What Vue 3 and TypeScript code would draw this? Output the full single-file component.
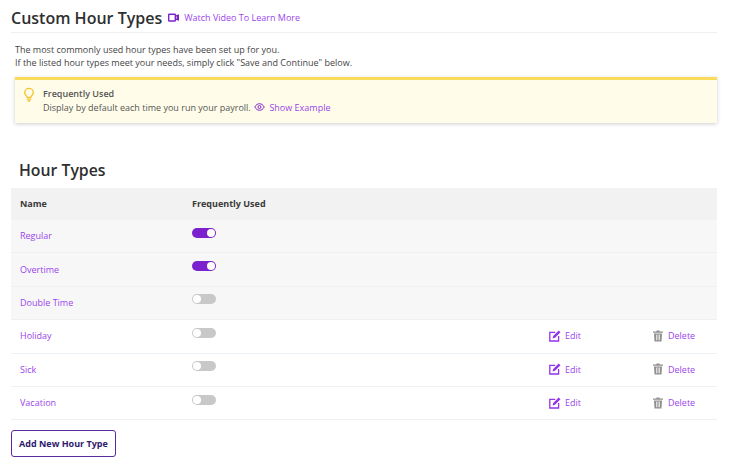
<script setup lang="ts">
interface HourType {
  name: string
  frequent: boolean
  builtIn: boolean
}

const hourTypes: HourType[] = [
  { name: 'Regular', frequent: true, builtIn: true },
  { name: 'Overtime', frequent: true, builtIn: true },
  { name: 'Double Time', frequent: false, builtIn: true },
  { name: 'Holiday', frequent: false, builtIn: false },
  { name: 'Sick', frequent: false, builtIn: false },
  { name: 'Vacation', frequent: false, builtIn: false }
]
</script>

<template>
  <div class="page">
    <header class="page-header">
      <h1 class="page-title">Custom Hour Types</h1>
      <a class="link video-link">
        <svg width="11" height="9" viewBox="0 0 11 9" fill="none" stroke="#7e22ce" stroke-width="1.4">
          <rect x="0.7" y="1.2" width="6.6" height="6.8" rx="0.5" />
          <path d="M7.5 3.2l2.8-.9v4.6l-2.8-.9" />
          <path d="M9.4 2.4v4.4" />
        </svg>
        Watch Video To Learn More
      </a>
    </header>

    <p class="intro">
      The most commonly used hour types have been set up for you.<br>
      If the listed hour types meet your needs, simply click "Save and Continue" below.
    </p>

    <div class="notice">
      <svg class="notice__icon" width="10" height="16" viewBox="0 0 14 20" fill="none" stroke="#f5c02c" stroke-width="1.8">
        <path d="M4.4 13.4C4.2 11.4 1 9.8 1 6.4a6 5.6 0 0 1 12 0c0 3.4-3.2 5-3.4 7z" />
        <path d="M4.6 15.8h4.8M5.8 18.4h2.4" stroke-linecap="round" />
      </svg>
      <div>
        <div class="notice__title">Frequently Used</div>
        <div class="notice__text">
          Display by default each time you run your payroll.
          <a class="link example-link">
            <svg width="11" height="8" viewBox="0 0 12 9" fill="none" stroke="#7e22ce" stroke-width="1.1">
              <path d="M0.7 4.5C2 2 3.9 0.8 6 0.8s4 1.2 5.3 3.7C10 7 8.1 8.2 6 8.2S2 7 0.7 4.5z" />
              <circle cx="6" cy="4.5" r="1.7" />
            </svg>
            Show Example
          </a>
        </div>
      </div>
    </div>

    <h2 class="section-title">Hour Types</h2>

    <div class="table">
      <div class="row row--head">
        <div class="cell-name">Name</div>
        <div class="cell-freq">Frequently Used</div>
      </div>
      <div
        v-for="item in hourTypes"
        :key="item.name"
        class="row"
        :class="{ 'row--shaded': item.builtIn }"
      >
        <a class="link cell-name">{{ item.name }}</a>
        <div class="cell-freq">
          <span class="toggle" :class="{ 'toggle--on': item.frequent }"><span class="toggle__knob"></span></span>
        </div>
        <template v-if="!item.builtIn">
          <a class="link cell-edit">
            <svg width="12" height="12" viewBox="0 0 12 12" fill="none">
              <path d="M9.6 6v5H.8V2.4h5.4" stroke="#9333ea" stroke-width="1.3" />
              <path d="M3.6 8.4l.6-2.4L9.7.6l1.8 1.7L6 7.8z" fill="#9333ea" />
            </svg>
            Edit
          </a>
          <a class="link cell-delete">
            <svg width="10" height="12" viewBox="0 0 10 12" fill="#8f8f8f">
              <path d="M0 1.6h3.2L3.7.5h2.6l.5 1.1H10v1.2H0z" />
              <path d="M1 3.4h8l-.5 8.1H1.5zM3 4.6v5.6h.7V4.6zm1.7 0v5.6h.7V4.6zm1.6 0v5.6H7V4.6z" fill-rule="evenodd" />
            </svg>
            Delete
          </a>
        </template>
      </div>
    </div>

    <button class="add-btn">Add New Hour Type</button>
  </div>
</template>

<style>
html,
body {
  background: #fff;
}
</style>

<style scoped>
.page {
  width: 730px;
  height: 473px;
  overflow: hidden;
  box-sizing: border-box;
  padding: 0 13px 0 11px;
  font-family: "Open Sans", "Noto Sans", sans-serif;
  font-size: 9px;
  color: #333;
}

.link {
  color: #9a45ec;
  cursor: pointer;
}

.page-header {
  display: flex;
  align-items: center;
  gap: 6px;
  height: 33px;
  border-bottom: 1px solid #f0f0f0;
  box-sizing: border-box;
  padding-top: 3px;
}

.page-title {
  margin: 0;
  font-size: 16px;
  font-weight: 600;
  color: #2f2f2f;
}

.video-link {
  display: flex;
  align-items: center;
  gap: 5px;
}

.intro {
  margin: 10px 0 0 4px;
  line-height: 13px;
  color: #444;
}

.notice {
  display: flex;
  gap: 9px;
  margin: 8px 0 0 4px;
  height: 46px;
  box-sizing: border-box;
  padding: 7px 0 0 9px;
  background: #fffde9;
  border-top: 3px solid #f9dc5c;
  box-shadow: 0 1px 4px rgba(0, 0, 0, 0.2);
  line-height: 14px;
}

.notice__title {
  font-weight: 600;
  color: #555;
}

.notice__text {
  color: #555;
}

.example-link {
  margin-left: 1px;
}

.example-link svg {
  margin-right: 2px;
}

.section-title {
  margin: 35px 0 0 8px;
  height: 30px;
  font-size: 15.8px;
  line-height: 24px;
  font-weight: 600;
  color: #2f2f2f;
}

.row {
  display: flex;
  align-items: center;
  height: 33.4px;
  box-sizing: border-box;
  padding-bottom: 1px;
  border-bottom: 1px solid #ecf1f6;
}

.row--head {
  height: 32px;
  background: #f2f2f2;
  border-bottom: none;
  font-weight: 700;
  color: #3a3a3a;
}

.row--shaded {
  background: #f7f7f7;
  border-bottom-color: #f0f0f0;
}

.cell-name {
  width: 181px;
  padding-left: 9px;
  box-sizing: border-box;
  flex: none;
}

.cell-freq {
  width: 357px;
  flex: none;
}

.cell-edit {
  display: flex;
  align-items: center;
  gap: 4px;
  width: 104px;
  flex: none;
}

.cell-delete {
  display: flex;
  align-items: center;
  gap: 5px;
}

.toggle {
  display: block;
  position: relative;
  top: -3px;
  width: 24px;
  height: 10px;
  border-radius: 5px;
  background: #c8c8c8;
}

.toggle__knob {
  position: absolute;
  left: 1px;
  top: 1px;
  width: 8px;
  height: 8px;
  border-radius: 50%;
  background: #fff;
}

.toggle--on {
  background: #7b22ce;
}

.toggle--on .toggle__knob {
  left: 15px;
}

.add-btn {
  display: block;
  margin-top: 10px;
  width: 105px;
  height: 27px;
  padding: 0;
  background: #fff;
  border: 1px solid #5b2a9d;
  border-radius: 3px;
  font-family: inherit;
  font-size: 9px;
  font-weight: 700;
  color: #2e1a6e;
  cursor: pointer;
}
</style>
